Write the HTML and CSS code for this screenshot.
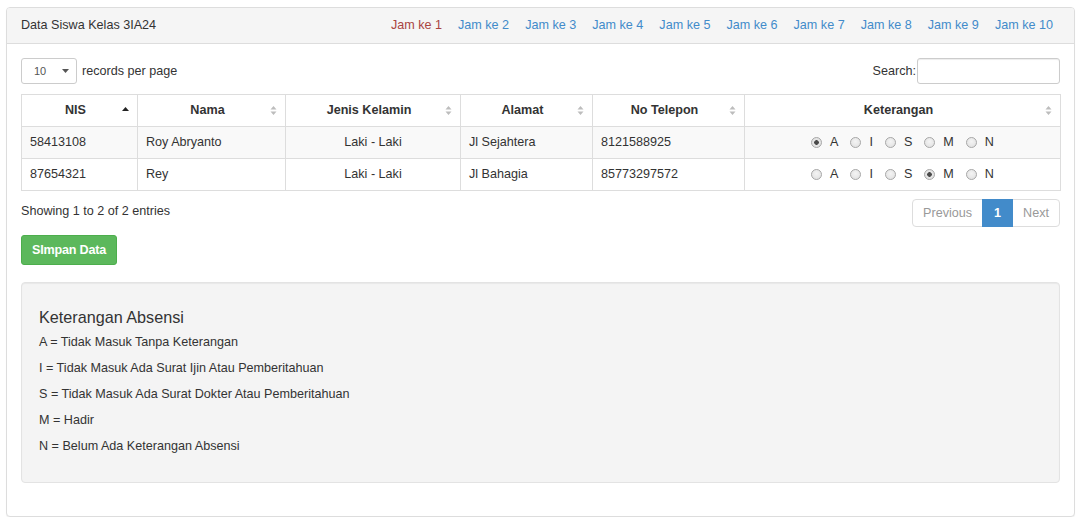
FILE: index.html
```html
<!DOCTYPE html>
<html>
<head>
<meta charset="utf-8">
<title>Data Siswa Kelas 3IA24</title>
<link rel="stylesheet" href="styles.css">
</head>
<body>
<div class="panel">
  <div class="panel-heading">
    <span class="panel-title">Data Siswa Kelas 3IA24</span>
    <nav class="jam-nav">
      <a class="jam active" href="#">Jam ke 1</a>
      <a class="jam" href="#">Jam ke 2</a>
      <a class="jam" href="#">Jam ke 3</a>
      <a class="jam" href="#">Jam ke 4</a>
      <a class="jam" href="#">Jam ke 5</a>
      <a class="jam" href="#">Jam ke 6</a>
      <a class="jam" href="#">Jam ke 7</a>
      <a class="jam" href="#">Jam ke 8</a>
      <a class="jam" href="#">Jam ke 9</a>
      <a class="jam" href="#">Jam ke 10</a>
    </nav>
  </div>
  <div class="panel-body">
    <div class="toolbar">
      <div class="length">
        <div class="fake-select"><span class="sel-val">10</span><svg class="sel-arrow" width="7" height="4" viewBox="0 0 7 4"><path d="M0 0H7L3.5 4Z" fill="#555"/></svg></div>
        <span class="length-label">records per page</span>
      </div>
      <label class="search">Search:<input class="search-input" type="text"></label>
    </div>

    <table class="data-table">
      <colgroup>
        <col class="c-nis"><col class="c-nama"><col class="c-jk"><col class="c-alamat"><col class="c-telp"><col class="c-ket">
      </colgroup>
      <thead>
        <tr>
          <th><div class="th-in"><span class="th-text">NIS</span><svg class="sort" width="7" height="10" viewBox="0 0 7 10"><path d="M0 5H7L3.5 1Z" fill="#222"/></svg></div></th>
          <th><div class="th-in"><span class="th-text">Nama</span><svg class="sort" width="7" height="11" viewBox="0 0 7 11"><path d="M0.5 4.6H6.5L3.5 1Z M0.5 6.4H6.5L3.5 10Z" fill="#bdbdbd"/></svg></div></th>
          <th><div class="th-in"><span class="th-text">Jenis Kelamin</span><svg class="sort" width="7" height="11" viewBox="0 0 7 11"><path d="M0.5 4.6H6.5L3.5 1Z M0.5 6.4H6.5L3.5 10Z" fill="#bdbdbd"/></svg></div></th>
          <th><div class="th-in"><span class="th-text">Alamat</span><svg class="sort" width="7" height="11" viewBox="0 0 7 11"><path d="M0.5 4.6H6.5L3.5 1Z M0.5 6.4H6.5L3.5 10Z" fill="#bdbdbd"/></svg></div></th>
          <th><div class="th-in"><span class="th-text">No Telepon</span><svg class="sort" width="7" height="11" viewBox="0 0 7 11"><path d="M0.5 4.6H6.5L3.5 1Z M0.5 6.4H6.5L3.5 10Z" fill="#bdbdbd"/></svg></div></th>
          <th><div class="th-in"><span class="th-text">Keterangan</span><svg class="sort" width="7" height="11" viewBox="0 0 7 11"><path d="M0.5 4.6H6.5L3.5 1Z M0.5 6.4H6.5L3.5 10Z" fill="#bdbdbd"/></svg></div></th>
        </tr>
      </thead>
      <tbody>
        <tr class="odd">
          <td>58413108</td>
          <td>Roy Abryanto</td>
          <td class="center">Laki - Laki</td>
          <td>Jl Sejahtera</td>
          <td>8121588925</td>
          <td>
            <div class="opts"><label class="opt"><input class="radio" type="radio" name="k1" checked>A</label><label class="opt"><input class="radio" type="radio" name="k1">I</label><label class="opt"><input class="radio" type="radio" name="k1">S</label><label class="opt"><input class="radio" type="radio" name="k1">M</label><label class="opt"><input class="radio" type="radio" name="k1">N</label></div>
          </td>
        </tr>
        <tr>
          <td>87654321</td>
          <td>Rey</td>
          <td class="center">Laki - Laki</td>
          <td>Jl Bahagia</td>
          <td>85773297572</td>
          <td>
            <div class="opts"><label class="opt"><input class="radio" type="radio" name="k2">A</label><label class="opt"><input class="radio" type="radio" name="k2">I</label><label class="opt"><input class="radio" type="radio" name="k2">S</label><label class="opt"><input class="radio" type="radio" name="k2" checked>M</label><label class="opt"><input class="radio" type="radio" name="k2">N</label></div>
          </td>
        </tr>
      </tbody>
    </table>

    <div class="table-footer">
      <div class="info">Showing 1 to 2 of 2 entries</div>
      <ul class="pagination">
        <li class="page disabled">Previous</li>
        <li class="page current">1</li>
        <li class="page disabled">Next</li>
      </ul>
    </div>

    <button class="btn-save" type="button">SImpan Data</button>

    <div class="well">
      <h4 class="well-title">Keterangan Absensi</h4>
      <p class="legend">A = Tidak Masuk Tanpa Keterangan</p>
      <p class="legend">I = Tidak Masuk Ada Surat Ijin Atau Pemberitahuan</p>
      <p class="legend">S = Tidak Masuk Ada Surat Dokter Atau Pemberitahuan</p>
      <p class="legend">M = Hadir</p>
      <p class="legend">N = Belum Ada Keterangan Absensi</p>
    </div>
  </div>
</div>
</body>
</html>
```

FILE: styles.css
```css
* { box-sizing: border-box; }

html, body {
  background: #ffffff;
}

body {
  margin: 0;
  padding: 7px 6px 0 6px;
  font-family: "Liberation Sans", Arial, Helvetica, sans-serif;
  font-size: 12.6px;
  line-height: 17px;
  color: #333333;
}

.panel {
  border: 1px solid #dddddd;
  border-radius: 4px;
  background: #ffffff;
  box-shadow: 0 1px 1px rgba(0, 0, 0, 0.05);
}

.panel-heading {
  display: flex;
  justify-content: space-between;
  align-items: center;
  padding: 9px 21px 9px 14px;
  background: #f5f5f5;
  border-bottom: 1px solid #dddddd;
  border-radius: 3px 3px 0 0;
}

.jam-nav {
  display: flex;
  gap: 16px;
}

.jam {
  color: #428bca;
  text-decoration: none;
}

.jam.active {
  color: #a94442;
}

.panel-body {
  padding: 14px;
}

.toolbar {
  display: flex;
  justify-content: space-between;
  align-items: center;
  height: 26px;
  margin-bottom: 10px;
}

.length {
  display: flex;
  align-items: center;
}

.fake-select {
  width: 56px;
  height: 26px;
  border: 1px solid #cccccc;
  border-radius: 3px;
  display: flex;
  align-items: center;
  justify-content: space-between;
  padding: 0 7px 0 12px;
  font-size: 11px;
  color: #555555;
  background: #ffffff;
}

.sel-arrow {
  display: block;
}

.length-label {
  margin-left: 5px;
}

.search {
  display: flex;
  align-items: center;
}

.search-input {
  width: 143px;
  height: 26px;
  margin: 0 0 0 1px;
  border: 1px solid #cccccc;
  border-radius: 3px;
  box-shadow: inset 0 1px 1px rgba(0, 0, 0, 0.075);
  font: inherit;
  padding: 0 6px;
}

.data-table {
  width: 1039px;
  table-layout: fixed;
  border-collapse: collapse;
  border: 1px solid #dddddd;
}

.c-nis { width: 116px; }
.c-nama { width: 148px; }
.c-jk { width: 175px; }
.c-alamat { width: 132px; }
.c-telp { width: 152px; }
.c-ket { width: 316px; }

.data-table th,
.data-table td {
  border: 1px solid #dddddd;
  padding: 7px 8px;
  line-height: 17px;
  text-align: left;
  vertical-align: middle;
}

.data-table th {
  font-weight: bold;
}

.th-in {
  display: flex;
  align-items: center;
  gap: 1px;
  height: 17px;
}

.th-text {
  flex: 1;
  text-align: center;
}

.sort {
  display: block;
  flex: none;
}

.data-table tr.odd td {
  background: #f9f9f9;
}

.data-table td.center {
  text-align: center;
}

.opts {
  display: flex;
  justify-content: center;
  align-items: center;
  height: 17px;
}

.opt {
  display: flex;
  align-items: center;
  margin-right: 12px;
  height: 17px;
}

.opt:last-child {
  margin-right: 0;
}

.radio {
  appearance: none;
  -webkit-appearance: none;
  display: block;
  width: 11px;
  height: 11px;
  margin: 0 8px 0 0;
  border: 1px solid #a8a8a8;
  border-radius: 50%;
  background: radial-gradient(circle at 50% 40%, #f4f4f4 0, #dedede 100%);
}

.radio:checked {
  background: radial-gradient(circle, #4a4a4a 0, #4a4a4a 2px, #e6e6e6 2.6px, #dedede 100%);
}

.table-footer {
  display: flex;
  justify-content: space-between;
  align-items: flex-start;
  margin-top: 8px;
  height: 28px;
}

.info {
  padding-top: 4px;
}

.pagination {
  display: flex;
  list-style: none;
  margin: 0;
  padding: 0;
}

.page {
  height: 28px;
  padding: 5px 10px;
  border: 1px solid #dddddd;
  margin-left: -1px;
  line-height: 16px;
  background: #ffffff;
}

.page:first-child {
  margin-left: 0;
  border-radius: 4px 0 0 4px;
}

.page:last-child {
  border-radius: 0 4px 4px 0;
}

.page.disabled {
  color: #999999;
}

.page.current {
  background: #428bca;
  border-color: #428bca;
  color: #ffffff;
  font-weight: bold;
  position: relative;
  padding: 5px 11px;
}

.btn-save {
  display: block;
  margin-top: 8px;
  height: 30px;
  padding: 5px 10px;
  border: 1px solid #4cae4c;
  border-radius: 3px;
  background: #5cb85c;
  color: #ffffff;
  font-family: inherit;
  font-size: 12.6px;
  font-weight: bold;
  line-height: 17px;
  letter-spacing: -0.2px;
}

.well {
  margin-top: 17px;
  margin-bottom: 19px;
  padding: 17px;
  background: #f4f4f4;
  border: 1px solid #e3e3e3;
  border-radius: 4px;
  box-shadow: inset 0 1px 1px rgba(0, 0, 0, 0.05);
}

.well-title {
  margin: 8px 0 7px;
  font-size: 16.2px;
  font-weight: normal;
  line-height: 18px;
}

.legend {
  margin: 0 0 8px;
  line-height: 18px;
}

.legend:last-child {
  margin-bottom: 10px;
}
```
